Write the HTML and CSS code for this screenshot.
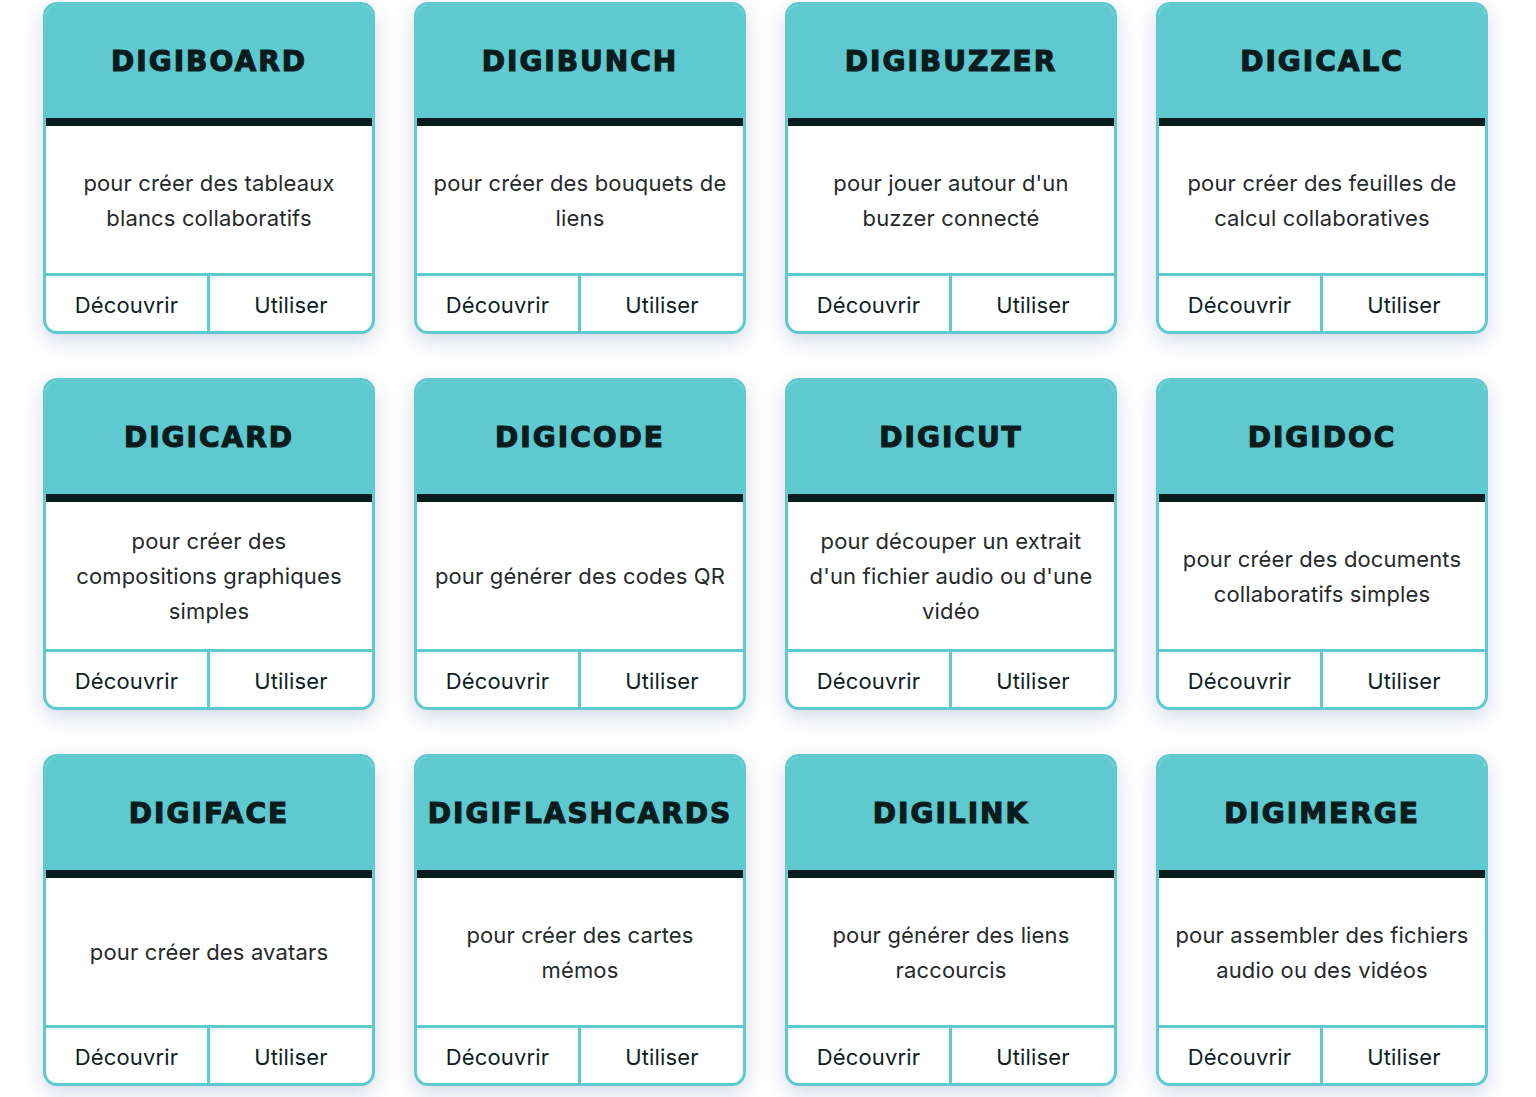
FILE: index.html
```html
<!DOCTYPE html>
<html lang="fr">
<head>
<meta charset="utf-8">
<title>Digi outils</title>
<link rel="stylesheet" href="styles.css">
</head>
<body>
<div class="grid">
  <div class="card"><div class="head">DIGIBOARD</div><div class="desc">pour créer des tableaux blancs collaboratifs</div><div class="actions"><a class="btn">Découvrir</a><a class="btn">Utiliser</a></div></div>
  <div class="card"><div class="head">DIGIBUNCH</div><div class="desc">pour créer des bouquets de liens</div><div class="actions"><a class="btn">Découvrir</a><a class="btn">Utiliser</a></div></div>
  <div class="card"><div class="head">DIGIBUZZER</div><div class="desc">pour jouer autour d'un buzzer connecté</div><div class="actions"><a class="btn">Découvrir</a><a class="btn">Utiliser</a></div></div>
  <div class="card"><div class="head">DIGICALC</div><div class="desc">pour créer des feuilles de calcul collaboratives</div><div class="actions"><a class="btn">Découvrir</a><a class="btn">Utiliser</a></div></div>
  <div class="card"><div class="head">DIGICARD</div><div class="desc">pour créer des compositions graphiques simples</div><div class="actions"><a class="btn">Découvrir</a><a class="btn">Utiliser</a></div></div>
  <div class="card"><div class="head">DIGICODE</div><div class="desc">pour générer des codes QR</div><div class="actions"><a class="btn">Découvrir</a><a class="btn">Utiliser</a></div></div>
  <div class="card"><div class="head">DIGICUT</div><div class="desc">pour découper un extrait d'un fichier audio ou d'une vidéo</div><div class="actions"><a class="btn">Découvrir</a><a class="btn">Utiliser</a></div></div>
  <div class="card"><div class="head">DIGIDOC</div><div class="desc">pour créer des documents collaboratifs simples</div><div class="actions"><a class="btn">Découvrir</a><a class="btn">Utiliser</a></div></div>
  <div class="card"><div class="head">DIGIFACE</div><div class="desc">pour créer des avatars</div><div class="actions"><a class="btn">Découvrir</a><a class="btn">Utiliser</a></div></div>
  <div class="card"><div class="head">DIGIFLASHCARDS</div><div class="desc">pour créer des cartes mémos</div><div class="actions"><a class="btn">Découvrir</a><a class="btn">Utiliser</a></div></div>
  <div class="card"><div class="head">DIGILINK</div><div class="desc">pour générer des liens raccourcis</div><div class="actions"><a class="btn">Découvrir</a><a class="btn">Utiliser</a></div></div>
  <div class="card"><div class="head">DIGIMERGE</div><div class="desc">pour assembler des fichiers audio ou des vidéos</div><div class="actions"><a class="btn">Découvrir</a><a class="btn">Utiliser</a></div></div>
</div>
</body>
</html>
```
FILE: styles.css
```css
html, body {
  margin: 0;
  padding: 0;
  background: #ffffff;
}
body {
  font-family: Inter, "Noto Sans", sans-serif;
  height: 1097px;
  overflow: hidden;
}
.grid {
  display: grid;
  grid-template-columns: repeat(4, 332px);
  column-gap: 39px;
  row-gap: 44px;
  padding: 2px 0 0 43px;
}
.card {
  display: flex;
  flex-direction: column;
  border: 3px solid #5ecad0;
  border-radius: 14px;
  overflow: hidden;
  background: #ffffff;
  box-shadow: 0 7px 20px rgba(80, 95, 160, 0.24);
}
.head {
  height: 113px;
  background: #5ecad0;
  border-bottom: 8px solid #0a1c1d;
  display: flex;
  align-items: center;
  justify-content: center;
  font-family: "DejaVu Sans", sans-serif;
  font-weight: 700;
  font-size: 28px;
  letter-spacing: 2px;
  color: #0a1c1d;
  -webkit-text-stroke: 1.2px #0a1c1d;
  white-space: nowrap;
  margin: -3px -3px 0 -3px;
  padding-top: 3px;
}
.desc {
  height: 145px;
  display: flex;
  align-items: center;
  justify-content: center;
  text-align: center;
  padding: 2px 15px 0;
  font-size: 22px;
  letter-spacing: 0.15px;
  line-height: 35px;
  color: #262a2b;
}
.actions {
  display: flex;
  height: 55px;
  border-top: 3px solid #5ecad0;
}
.btn {
  flex: 1;
  display: flex;
  align-items: center;
  justify-content: center;
  font-size: 22px;
  letter-spacing: 0.15px;
  color: #0e2223;
  padding-top: 2px;
  cursor: pointer;
}
.btn:first-child {
  flex: 0 0 161px;
}
.btn + .btn {
  border-left: 3px solid #5ecad0;
}
```
